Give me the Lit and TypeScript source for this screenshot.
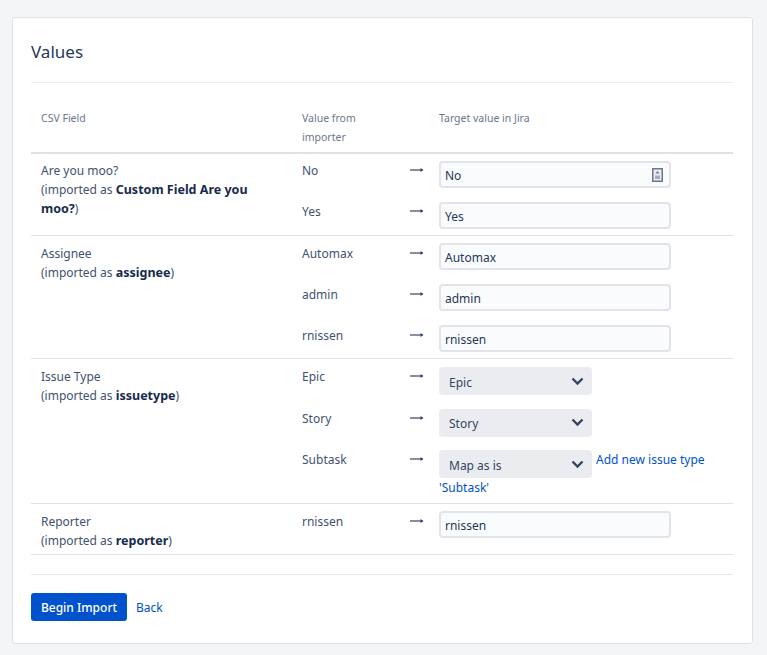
import { LitElement, html, css } from 'lit';
import { customElement } from 'lit/decorators.js';

type Target =
  | { kind: 'input'; value: string; icon?: boolean }
  | { kind: 'select'; value: string; add?: boolean };

interface Mapping {
  from: string;
  target: Target;
}

interface Field {
  name: string;
  imported: string;
  mappings: Mapping[];
}

const FIELDS: Field[] = [
  {
    name: 'Are you moo?',
    imported: 'Custom Field Are you moo?',
    mappings: [
      { from: 'No', target: { kind: 'input', value: 'No', icon: true } },
      { from: 'Yes', target: { kind: 'input', value: 'Yes' } },
    ],
  },
  {
    name: 'Assignee',
    imported: 'assignee',
    mappings: [
      { from: 'Automax', target: { kind: 'input', value: 'Automax' } },
      { from: 'admin', target: { kind: 'input', value: 'admin' } },
      { from: 'rnissen', target: { kind: 'input', value: 'rnissen' } },
    ],
  },
  {
    name: 'Issue Type',
    imported: 'issuetype',
    mappings: [
      { from: 'Epic', target: { kind: 'select', value: 'Epic' } },
      { from: 'Story', target: { kind: 'select', value: 'Story' } },
      { from: 'Subtask', target: { kind: 'select', value: 'Map as is', add: true } },
    ],
  },
  {
    name: 'Reporter',
    imported: 'reporter',
    mappings: [{ from: 'rnissen', target: { kind: 'input', value: 'rnissen' } }],
  },
];

@customElement('app-root')
export class AppRoot extends LitElement {
  static styles = css`
    :host {
      display: block;
      height: 655px;
      box-sizing: border-box;
      padding: 17px 14px 11px 12px;
      background: #f4f5f7;
      font-family: 'Noto Sans', 'Open Sans', sans-serif;
      font-size: 12px;
      line-height: 19px;
      color: #42526e;
    }

    .card {
      box-sizing: border-box;
      height: 627px;
      padding: 0 19px 0 18px;
      background: #fff;
      border: 1px solid #dfe1e6;
      border-radius: 3px;
    }

    h2 {
      margin: 0;
      padding: 22px 0 18px;
      font-size: 17px;
      line-height: 24px;
      font-weight: 400;
      color: #253858;
      border-bottom: 1px solid #ebecf0;
    }

    .head,
    .row {
      display: grid;
      grid-template-columns: 261px 1fr;
    }

    .head {
      margin-top: 26px;
      padding-bottom: 5px;
      font-size: 10.5px;
      color: #6b778c;
      border-bottom: 2px solid #dfe1e6;
    }

    .head-values {
      display: grid;
      grid-template-columns: 137px 1fr;
    }

    .head-values div,
    .field,
    .from {
      padding-left: 10px;
    }

    .head-values div:first-child {
      width: 70px;
    }

    .row {
      border-bottom: 1px solid #dfe1e6;
      padding: 8px 0 4px;
    }

    .row.first {
      padding-top: 7px;
    }

    .field {
      padding-right: 14px;
    }

    b {
      color: #172b4d;
      font-size: 12.5px;
      font-weight: 700;
    }

    .mappings {
      display: flex;
      flex-direction: column;
      gap: 15px;
      padding-bottom: 2px;
    }

    .first .mappings {
      gap: 14px;
    }

    .mappings.selects {
      gap: 13.5px;
    }

    .mapping {
      display: grid;
      grid-template-columns: 118px 29px 1fr;
    }

    .arrow {
      width: 14px;
      height: 10px;
      margin-top: 4px;
    }

    .input {
      box-sizing: border-box;
      display: flex;
      align-items: center;
      justify-content: space-between;
      width: 232px;
      height: 27px;
      margin-top: -1px;
      padding: 1px 6px 0 4px;
      background: #fafbfc;
      border: 2px solid #e2e4e9;
      border-radius: 4px;
      color: #253858;
    }

    .first .input {
      margin-top: 0;
    }

    .select-line {
      display: flex;
      gap: 4px;
    }

    .select {
      box-sizing: border-box;
      display: flex;
      align-items: center;
      justify-content: space-between;
      width: 153px;
      height: 28px;
      padding: 2px 8px 0 10px;
      background: #ebecf0;
      border-radius: 4px;
      color: #344563;
    }

    .select svg {
      margin-top: -2px;
    }

    a {
      color: #0052cc;
      text-decoration: none;
    }

    .subtask {
      display: block;
    }

    .actions {
      margin-top: 19px;
      padding-top: 18px;
      display: flex;
      align-items: center;
      gap: 9px;
      border-top: 1px solid #e6e8ec;
    }

    button {
      height: 28px;
      width: 96px;
      padding: 0;
      border: 0;
      border-radius: 3px;
      background: #0052cc;
      color: #fff;
      font: inherit;
      font-weight: 500;
    }
  `;

  private _renderArrow() {
    return html`<svg class="arrow" viewBox="0 0 14 10" fill="none" stroke="#344563">
      <path d="M0 5h12.5" stroke-width="1.2" />
      <path d="M10.5 3l3 2-3 2z" fill="#344563" stroke="none" />
    </svg>`;
  }

  private _renderTarget(target: Target) {
    if (target.kind === 'input') {
      return html`<div class="input">
        <span>${target.value}</span>
        ${target.icon
          ? html`<svg width="11" height="14" viewBox="0 0 11 14">
              <rect x="0.75" y="0.75" width="9.5" height="12.5" fill="#ebecf0" stroke="#6b778c" stroke-width="1.5" />
              <path d="M5.5 3l2 2.5h-4z" fill="#6b778c" />
              <rect x="3" y="7.5" width="5" height="3.5" fill="#a5adba" />
            </svg>`
          : ''}
      </div>`;
    }
    return html`<div class="select-line">
        <div class="select">
          <span>${target.value}</span>
          <svg width="13" height="9" viewBox="0 0 13 9" fill="none" stroke="#344563" stroke-width="2.4">
            <path d="M1.5 1.5l5 5 5-5" />
          </svg>
        </div>
        ${target.add ? html`<a href="#">Add new issue type</a>` : ''}
      </div>
      ${target.add ? html`<a class="subtask" href="#">'Subtask'</a>` : ''}`;
  }

  render() {
    return html`<div class="card">
      <h2>Values</h2>
      <div class="head">
        <div class="field">CSV Field</div>
        <div class="head-values">
          <div>Value from importer</div>
          <div>Target value in Jira</div>
        </div>
      </div>
      ${FIELDS.map(
        (field, i) => html`<div class="row ${i === 0 ? 'first' : ''}">
          <div class="field">${field.name}<br />(imported as <b>${field.imported}</b>)</div>
          <div class="mappings ${field.mappings[0].target.kind === 'select' ? 'selects' : ''}">
            ${field.mappings.map(
              (m) => html`<div class="mapping">
                <div class="from">${m.from}</div>
                ${this._renderArrow()}
                <div>${this._renderTarget(m.target)}</div>
              </div>`,
            )}
          </div>
        </div>`,
      )}
      <div class="actions">
        <button>Begin Import</button>
        <a href="#">Back</a>
      </div>
    </div>`;
  }
}
